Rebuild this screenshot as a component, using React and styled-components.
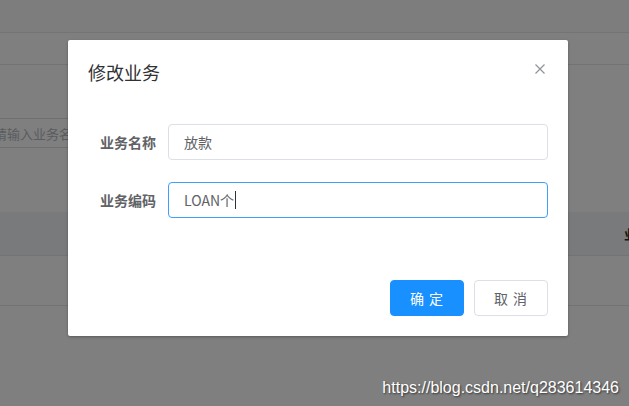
import React from 'react';
import styled, { createGlobalStyle } from 'styled-components';

const GlobalStyle = createGlobalStyle`
  html, body {
    margin: 0;
    padding: 0;
    background: #fff;
    font-family: "Noto Sans CJK SC", "Liberation Sans", sans-serif;
    overflow: hidden;
  }
`;

const Page = styled.div`
  width: 629px;
  height: 406px;
  position: relative;
  overflow: hidden;
  background: #fff;
`;

const TopBar = styled.div`
  height: 32px;
  border-bottom: 1px solid #e8e8e8;
  background: #fafafa;
`;

const TabBar = styled.div`
  height: 31px;
  border-bottom: 1px solid #e6e6e6;
`;

const SearchRow = styled.div`
  padding: 53px 0 0 0;
  height: 147px;
  box-sizing: border-box;
`;

const SearchInput = styled.div`
  margin-left: -22px;
  width: 220px;
  height: 30px;
  border: 1px solid #dcdfe6;
  border-radius: 4px;
  box-sizing: border-box;
  display: flex;
  align-items: center;
  padding-left: 15px;
  font-size: 13px;
  color: #b4b8c0;
`;

const Table = styled.div``;

const TableHead = styled.div`
  height: 43px;
  background: #f3f4f6;
  border-bottom: 1px solid #e6e6e6;
  display: flex;
  align-items: center;
  justify-content: flex-end;
  margin-right: -8px;
  font-size: 13px;
  font-weight: bold;
  color: #303133;
`;

const TableRow = styled.div`
  height: 49px;
  border-bottom: 1px solid #e6e6e6;
`;

const Mask = styled.div`
  position: absolute;
  inset: 0;
  background: rgba(0, 0, 0, 0.5);
  display: flex;
  align-items: flex-start;
  padding: 40px 0 0 68px;
`;

const Dialog = styled.div`
  width: 500px;
  background: #fff;
  border-radius: 2px;
  box-shadow: 0 1px 3px rgba(0, 0, 0, 0.3);
  position: relative;
`;

const Header = styled.div`
  padding: 20px 20px 10px;
  height: 24px;
  display: flex;
  align-items: center;
`;

const Title = styled.div`
  font-size: 18px;
  line-height: 24px;
  color: #303133;
`;

const Close = styled.button`
  position: absolute;
  top: 21px;
  right: 20px;
  width: 16px;
  height: 16px;
  padding: 0;
  border: none;
  background: none;
  display: flex;
  align-items: center;
  justify-content: center;
  cursor: pointer;
`;

const Body = styled.div`
  padding: 30px 20px 52px;
  display: flex;
  flex-direction: column;
  gap: 22px;
`;

const FormItem = styled.div`
  display: flex;
  align-items: center;
`;

const Label = styled.label`
  width: 80px;
  padding-right: 12px;
  box-sizing: border-box;
  text-align: right;
  font-size: 14px;
  font-weight: bold;
  color: #606266;
`;

const Input = styled.div`
  flex: 1;
  height: 36px;
  box-sizing: border-box;
  border: 1px solid ${({ $focus }) => ($focus ? '#409eff' : '#dcdfe6')};
  border-radius: 4px;
  padding: 0 15px;
  display: flex;
  align-items: center;
  font-size: 14px;
  color: #606266;
`;

const Caret = styled.span`
  display: inline-block;
  width: 1px;
  height: 18px;
  background: #303133;
  margin-left: 1px;
`;

const Footer = styled.div`
  padding: 10px 20px 20px;
  display: flex;
  justify-content: flex-end;
  gap: 10px;
`;

const Button = styled.button`
  width: 74px;
  height: 36px;
  border-radius: 4px;
  font-family: "Noto Sans CJK SC", "Liberation Sans", sans-serif;
  font-size: 14px;
  letter-spacing: 1px;
  white-space: pre;
  cursor: pointer;
  border: 1px solid ${({ $primary }) => ($primary ? '#1890ff' : '#dcdfe6')};
  background: ${({ $primary }) => ($primary ? '#1890ff' : '#fff')};
  color: ${({ $primary }) => ($primary ? '#fff' : '#606266')};
`;

const Watermark = styled.div`
  position: absolute;
  right: 10px;
  bottom: 9px;
  font-family: "Liberation Sans", Arial, sans-serif;
  font-size: 16px;
  color: #fff;
  text-shadow: 1px 1px 2px rgba(0, 0, 0, 0.6);
`;

export default function App() {
  return (
    <Page>
      <GlobalStyle />
      <TopBar />
      <TabBar />
      <SearchRow>
        <SearchInput>请输入业务名称</SearchInput>
      </SearchRow>
      <Table>
        <TableHead>业</TableHead>
        <TableRow />
      </Table>
      <Mask>
        <Dialog>
          <Header>
            <Title>修改业务</Title>
          </Header>
          <Close aria-label="关闭">
            <svg width="12" height="12" viewBox="0 0 12 12">
              <path d="M1.5 1.5 L10.5 10.5 M10.5 1.5 L1.5 10.5" stroke="#909399" strokeWidth="1.2" fill="none" />
            </svg>
          </Close>
          <Body>
            <FormItem>
              <Label>业务名称</Label>
              <Input>放款</Input>
            </FormItem>
            <FormItem>
              <Label>业务编码</Label>
              <Input $focus>LOAN个<Caret /></Input>
            </FormItem>
          </Body>
          <Footer>
            <Button $primary>确 定</Button>
            <Button>取 消</Button>
          </Footer>
        </Dialog>
      </Mask>
      <Watermark>https://blog.csdn.net/q283614346</Watermark>
    </Page>
  );
}
